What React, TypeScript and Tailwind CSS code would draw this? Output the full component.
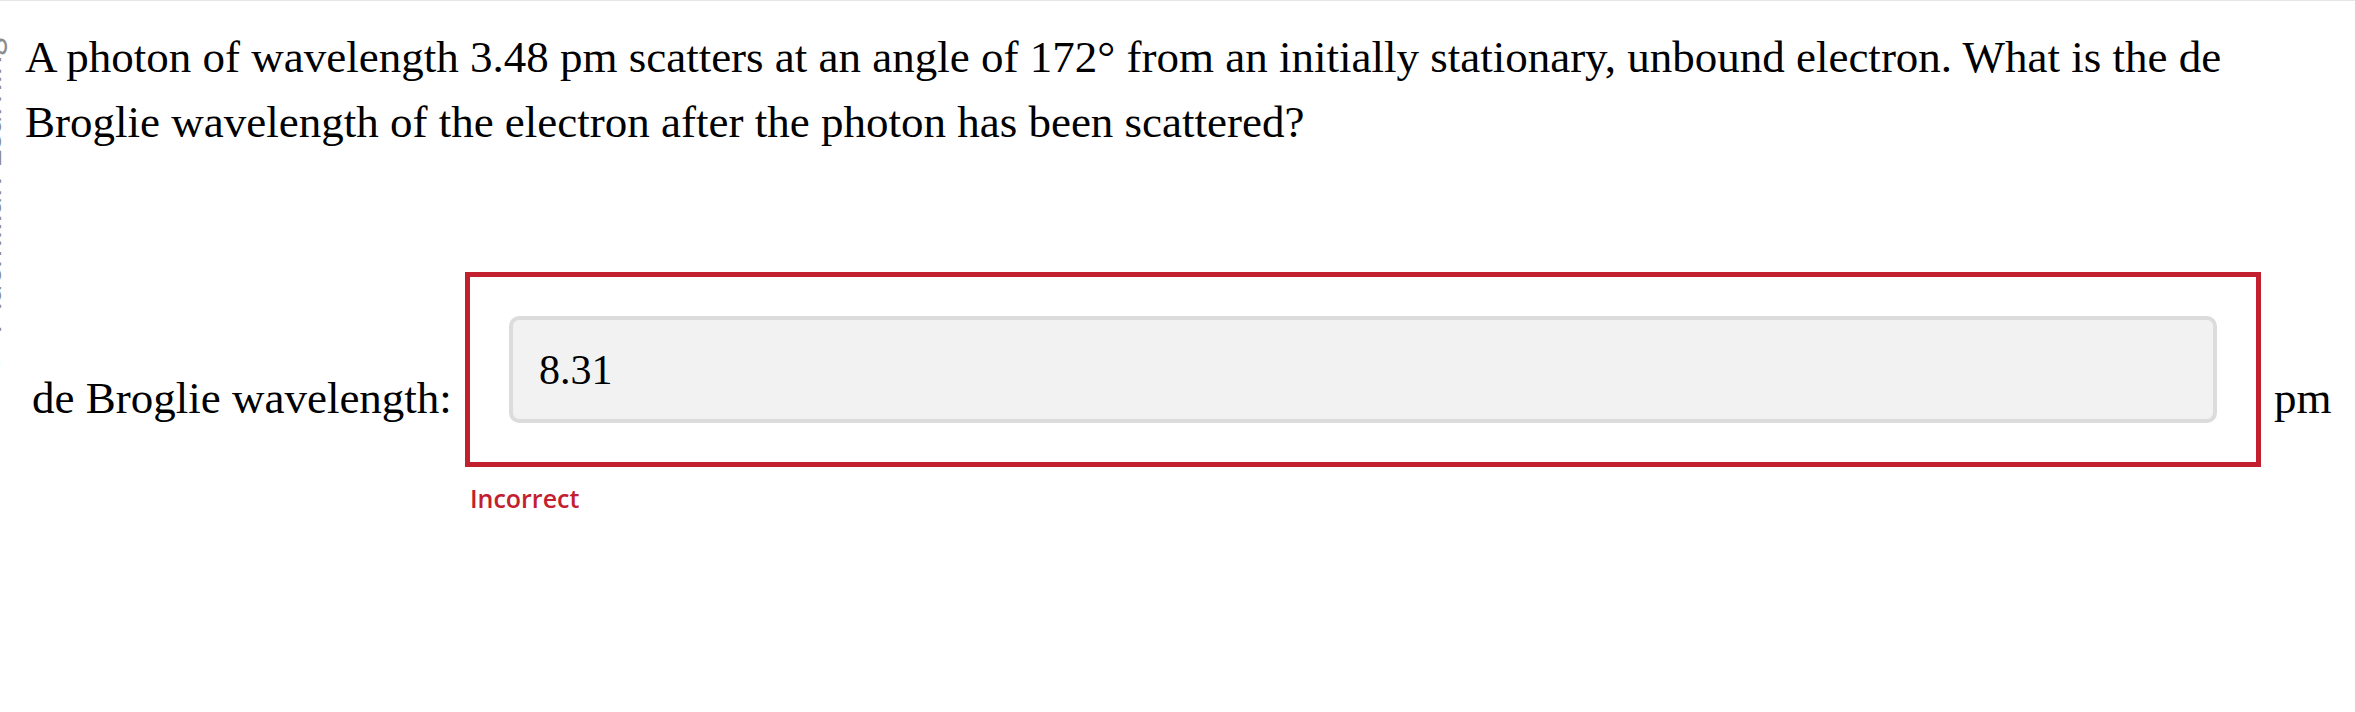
import React from 'react';

export default function App() {
  return (
    <div className="relative w-full h-[712px] overflow-hidden bg-white border-t border-[#e6e6e6] text-black">
      {/* watermark strip, mostly clipped at the left edge */}
      <div className="absolute left-[-34px] top-[44px] h-[340px] leading-[42px] text-[35px] text-[#8c8c8c] font-['Lato',sans-serif] [writing-mode:vertical-rl] rotate-180 whitespace-nowrap select-none">
        © Macmillan Learning
      </div>

      <p className="pl-[25px] pr-[40px] pt-[24px] text-[45px] leading-[65px] font-['Liberation_Serif','Times_New_Roman',serif]">
        A photon of wavelength 3.48 pm scatters at an angle of 172° from an initially stationary, unbound electron. What
        is the de Broglie wavelength of the electron after the photon has been scattered?
      </p>

      <div className="flex items-start pl-[32px] mt-[117px] font-['Liberation_Serif','Times_New_Roman',serif]">
        <span className="mt-[94px] text-[45px] leading-[65px] whitespace-nowrap">de Broglie wavelength:</span>

        <div className="flex flex-col ml-[13px]">
          <div className="w-[1796px] border-[5px] border-[#c3202f] p-[39px]">
            <input
              readOnly
              defaultValue="8.31"
              className="w-full h-[107px] rounded-[10px] border-[4px] border-[#dcdcdc] bg-[#f2f2f2] pl-[26px] text-[42px] text-black outline-none font-['Liberation_Serif','Times_New_Roman',serif]"
            />
          </div>
          <span className="mt-[14px] ml-[5px] text-[25px] leading-[34px] font-semibold text-[#c3202f] font-['Open_Sans',sans-serif]">
            Incorrect
          </span>
        </div>

        <span className="mt-[94px] ml-[13px] text-[45px] leading-[65px]">pm</span>
      </div>
    </div>
  );
}
